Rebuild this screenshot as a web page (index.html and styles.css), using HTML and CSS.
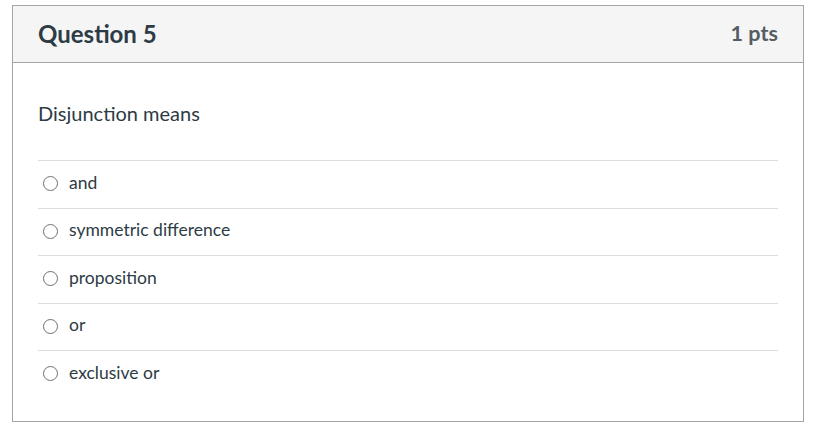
FILE: index.html
```html
<!DOCTYPE html>
<html>
<head>
<meta charset="utf-8">
<link rel="stylesheet" href="styles.css">
</head>
<body>
<div class="card">
  <div class="header">
    <span class="title">Question 5</span>
    <span class="pts">1 pts</span>
  </div>
  <div class="content">
    <div class="qtext">Disjunction means</div>
    <div class="answers">
      <div class="answer"><span class="radio"></span><span class="label">and</span></div>
      <div class="answer"><span class="radio"></span><span class="label">symmetric difference</span></div>
      <div class="answer"><span class="radio"></span><span class="label">proposition</span></div>
      <div class="answer"><span class="radio"></span><span class="label">or</span></div>
      <div class="answer"><span class="radio"></span><span class="label">exclusive or</span></div>
    </div>
  </div>
</div>
</body>
</html>
```
FILE: styles.css
```css
html, body {
  margin: 0;
  padding: 0;
  background: #ffffff;
}
body {
  font-family: Lato, "Noto Sans", sans-serif;
  color: #2d3b45;
}
.card {
  margin: 5px 0 0 12px;
  width: 790px;
  height: 415px;
  border: 1px solid #a5a5a5;
  box-sizing: content-box;
}
.header {
  height: 56px;
  background: #f5f5f5;
  border-bottom: 1px solid #a5a5a5;
  display: flex;
  align-items: center;
  justify-content: space-between;
  padding: 0 25px;
}
.title {
  font-size: 24px;
  font-weight: 700;
  color: #2d3b45;
  margin-top: -2px;
}
.pts {
  font-size: 21.6px;
  font-weight: 700;
  color: #555c63;
  margin-top: -2px;
}
.content {
  padding: 36px 25px 0 25px;
}
.qtext {
  font-size: 20px;
  line-height: 28px;
  margin-bottom: 33px;
}
.answer {
  border-top: 1px solid #dddddd;
  height: 46.5px;
  display: flex;
  align-items: center;
  padding-left: 5px;
}
.radio {
  width: 13px;
  height: 13px;
  border: 1px solid #707070;
  border-radius: 50%;
  margin-right: 11px;
  margin-top: -1px;
  flex: none;
}
.label {
  font-size: 17.5px;
  color: #2d3b45;
  margin-top: -4px;
}
```
